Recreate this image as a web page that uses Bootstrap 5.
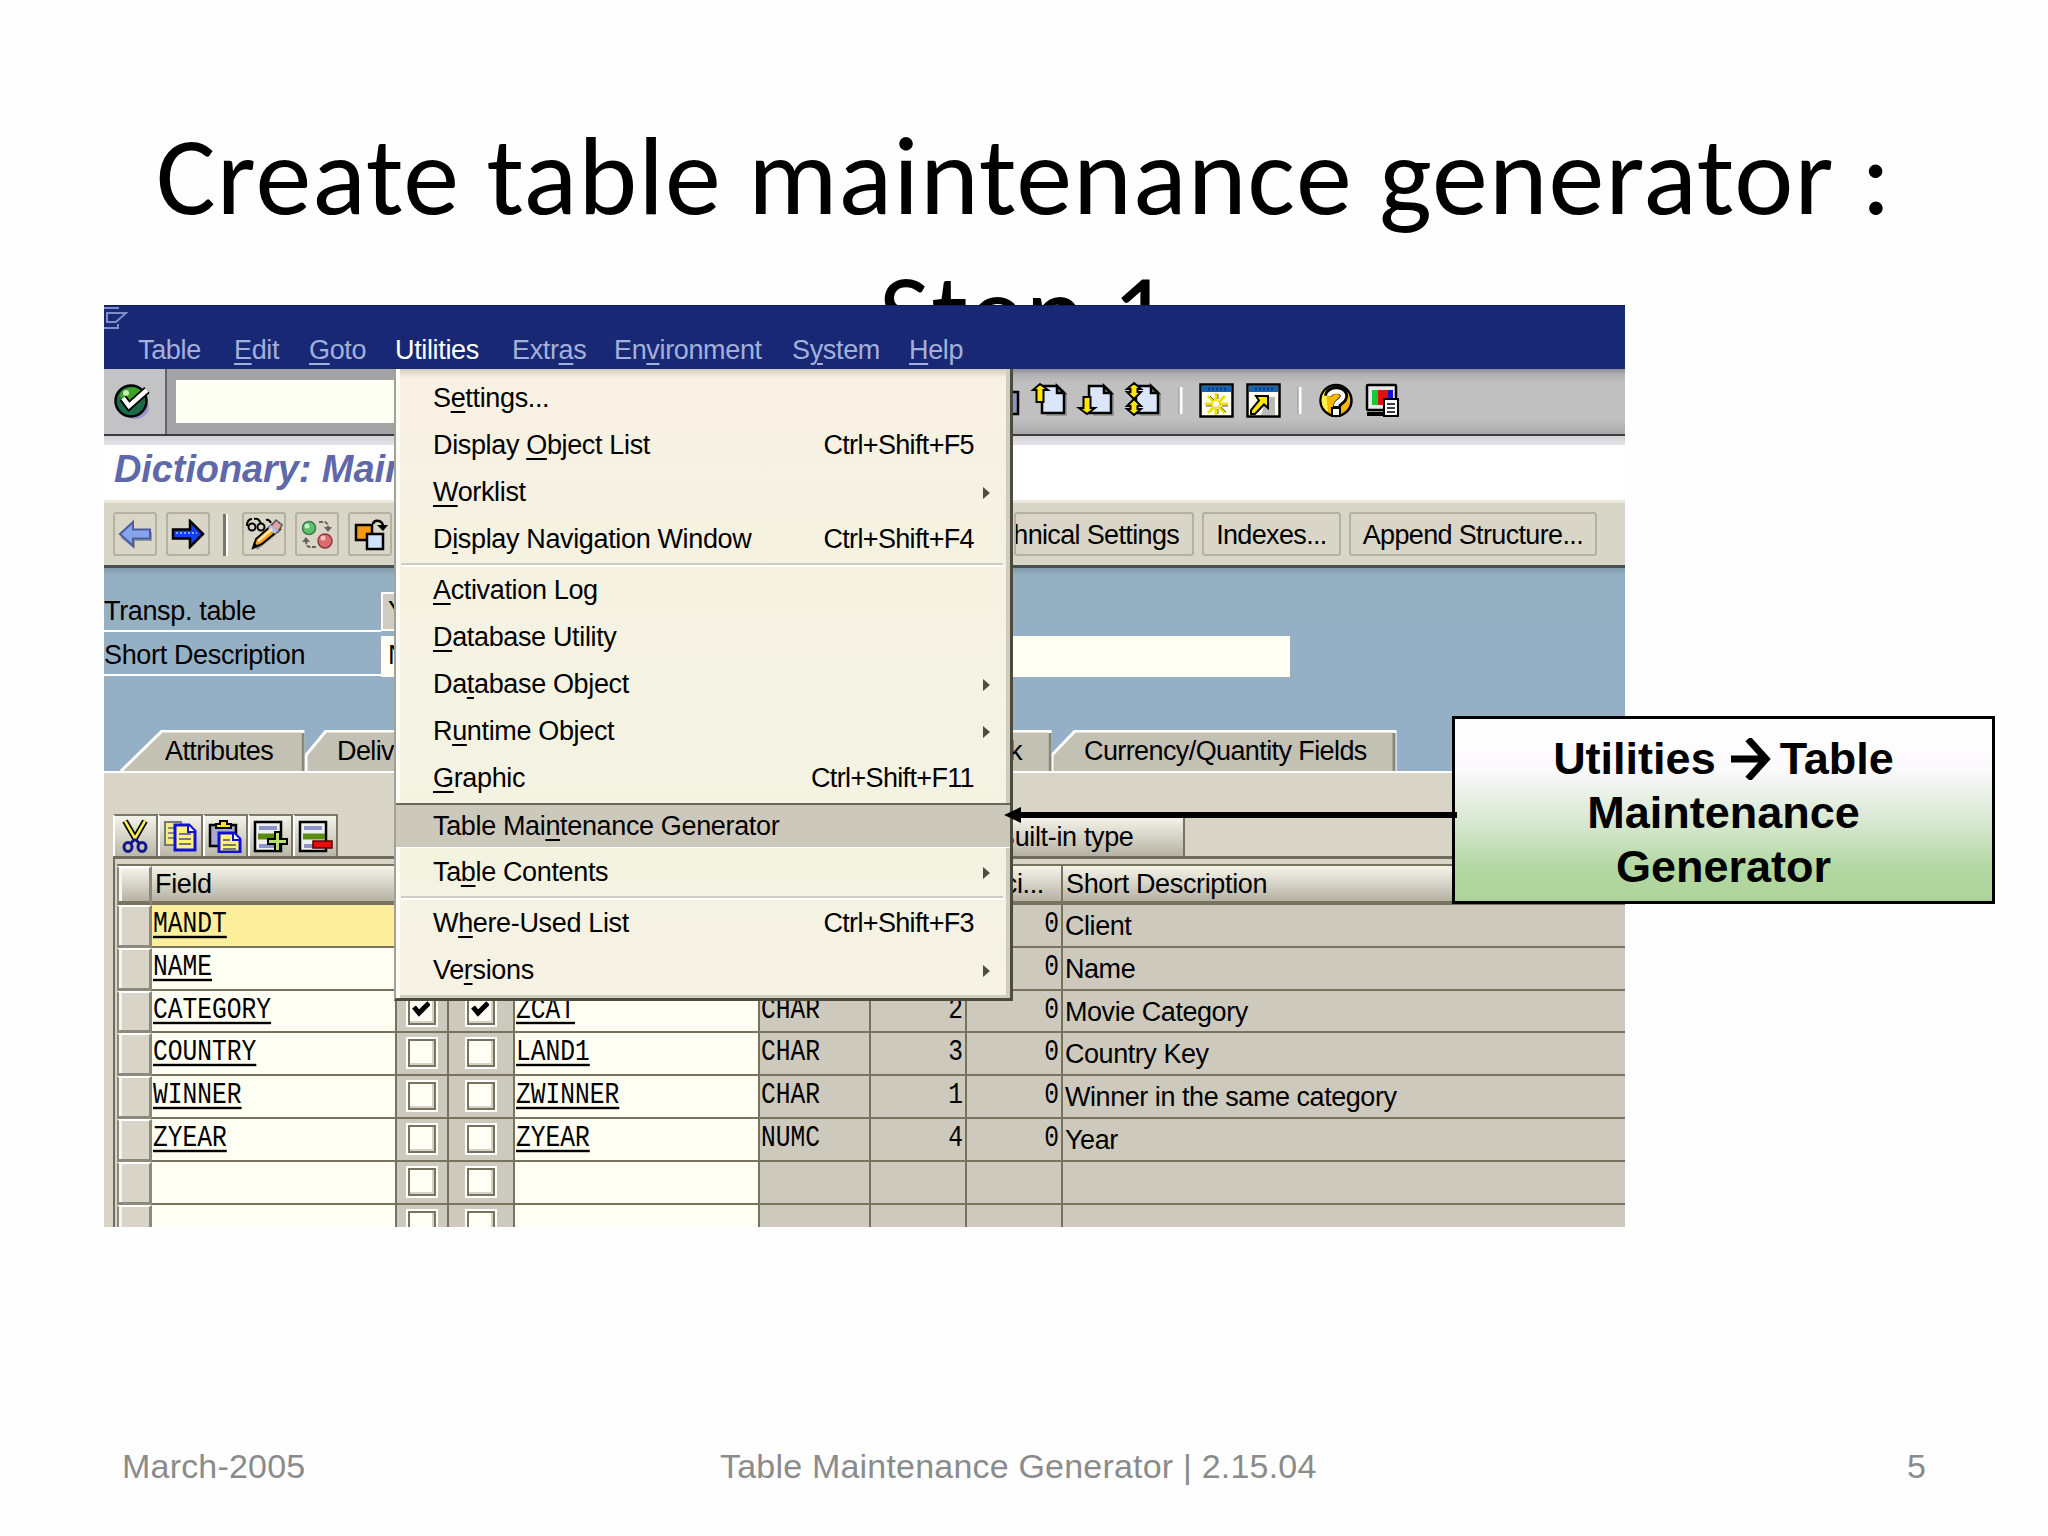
<!DOCTYPE html>
<html lang="en">
<head>
<meta charset="utf-8">
<title>Table Maintenance Generator</title>
<link href="https://cdn.jsdelivr.net/npm/bootstrap@5.3.0/dist/css/bootstrap.min.css" rel="stylesheet">
<style>
  body{background:#fefefe;color:#000;font-family:"Liberation Sans",Arial,sans-serif;margin:0}
  .slide{width:2048px;height:1536px;overflow:hidden}
  .slide-title{height:305px;padding-top:107px;overflow:hidden;font:400 112px/137px Carlito,Lato,sans-serif;letter-spacing:1.05px;white-space:nowrap}
  .sap{width:1521px;height:922px;margin-left:104px;font-size:27px;letter-spacing:-.35px;line-height:38px;white-space:nowrap;background:#d8d5c6}
  .sap u{text-underline-offset:4px;text-decoration-thickness:2px}
  .menubar{height:64px;background:#182874;color:#a3b0dc;border-top:1px solid #101c58;padding-left:34px;display:grid;grid-template-columns:96px 75px 86px 117px 102px 178px 117px 80px;align-items:end}
  .menubar .on{color:#fff}
  .corner{left:0;top:0}
  .stdbar{height:67px;background:linear-gradient(#8e8e96,#b2b2b4 6px,#c0c0c1 14px,#c0c0c1 50px,#a9a9a9);border-bottom:2.5px solid #3c3c40}
  .okcell{width:63px;border-right:2px solid #66666a;background:#c3c3c6;padding-left:9px}
  .cmdzone{width:846px;background:#a3a3a5;padding:11px 0 0 9px}
  .cmdfield{width:225px;height:43px;background:#fdfff2}
  .heading{height:67px;background:linear-gradient(#d4d2d6,#e6e3e8 9px,#fff 9px);border-bottom:3px solid #ece9dc;font-weight:700;font-style:italic;font-size:38px;line-height:66px;color:#5f69a9;letter-spacing:-.1px;padding-left:10px;overflow:hidden}
  .appbar{height:65px;background:#d8d6c6;border-bottom:3px solid #4a4f52;padding:9px 28px 0 9px}
  .tbtn{height:44px;border:2px solid #b4b1a1;border-radius:3px;background:#d9d6c7;padding:0 12px;letter-spacing:-.65px;line-height:42px}
  .tbtn.ic{width:44px;padding:0;margin-right:9px;display:flex;align-items:center;justify-content:center}
  .tbtn.tech{width:180px;padding:0 13px 0 0;overflow:hidden;display:flex;justify-content:flex-end}
  .tsep{width:5px;height:42px;background:#7a7768;border-right:2px solid #fff;margin:2px 14px 0 4px}
  .headform{height:162px;background:linear-gradient(#7f98a8,#95b0c2 7px,#95b0c6)}
  .frow{height:40px;width:277px;border-bottom:2.5px solid #fff;line-height:38px}
  .namebox{width:40px;height:39px;background:#cfcdc1;border:2px solid #fff;padding-left:5px;line-height:34px}
  .descbox{width:909px;height:41px;background:#fffef2;padding-left:7px;line-height:39px}
  .tabs{height:43px;background:#95b0c6;border-bottom:2.5px solid #fff}
  .gridbody{padding:41px 0 0 9px}
  .gbtn{width:45px;height:42px;background:linear-gradient(#f4f3ea,#b9b7a8);border:2px solid #7b7869;border-left-color:#fff;border-bottom:0;display:flex;align-items:center;justify-content:center;padding-right:2px}
  .gframe{border-left:2px solid #6f6c5e;border-top:3px solid #6f6c5e;padding:5px 0 0 2px}
  .line9{display:grid;grid-template-columns:35px 245px 52px 66px 245px 111px 96px 96px 562px;height:42.8px}
  .line9>div{border-right:2.5px solid #77735f;border-bottom:2.5px solid #77735f;background:#cdcabd;overflow:hidden}
  .line9>div:last-child{border-right:0}
  .line9 .sel{background:#d8d5c8;border:3px solid #8d8a7c;border-left:2px solid #8d8a7c;border-top:2px solid #fff;box-shadow:inset 3px 0 0 #f6f5ee}
  .line9 .ed{background:#fffef2}
  .line9 .hot{background:#fdee9b}
  .line9 .mono{font-family:"Liberation Mono",monospace;font-size:24.6px;letter-spacing:0;line-height:40px;padding-left:1px}
  .line9 .mono span{display:inline-block;transform:scaleY(1.2)}
  .line9 .mono .key{text-decoration:underline;text-decoration-thickness:2px;text-underline-offset:3px;text-decoration-skip-ink:none}
  .line9 .num{text-align:right;padding-right:2px}
  .line9.hd{height:41px;border-top:2px solid #77735f}
  .line9.hd>div{background:linear-gradient(#f6f4ea,#e0ded2 35%,#b5b2a4);border-bottom:4px solid #77735f;line-height:36px;padding-left:3px}
  .line9 .dec{text-align:right;padding-right:17px}
  .cbx{width:32px;height:32px;border:2px solid #fff;margin:4px auto 0;background:#77735f;padding:2px}
  .cbx i{display:block;width:24px;height:24px;background:#fffef4;border-right:2px solid #d4d2c6;border-bottom:2px solid #d4d2c6}
  .desc{padding-left:2px;line-height:43px;letter-spacing:-.45px}
  .built{width:191px;height:39px;margin-left:656px;padding-left:3px;background:linear-gradient(#f6f4ea,#b5b2a4);border-right:2px solid #77735f;overflow:hidden;line-height:40px}
  .umenu{left:290px;top:64px;width:619px;height:632px;background:linear-gradient(#d0ccc0,#f8f1e4 9px,#f7f1e3 80px,#f5f2e2 160px,#f4f3e2 500px,#f6f2e4);border:2px solid #a5a293;border-top:0;border-right:3px solid #4c4b3c;border-bottom:3px solid #4c4b3c;box-shadow:inset 4px 0 0 #fefdf8,inset -4px -3px 0 #cfcdc0;padding:6px 0 0 0}
  .mi{height:47px;line-height:47px;padding:0 36px 0 37px;display:flex;justify-content:space-between;align-items:center}
  .mi span+span{letter-spacing:-.65px}
  .mi.sub{padding-right:20px}
  .mi.act{background:#ccc8bb;height:45px;line-height:42px;margin:1px 0;border-top:2px solid #6b685a;border-bottom:1px solid #fff}
  .msep{height:4px;border-top:2px solid #cfcdc2;border-bottom:2px solid #fff;margin:0 7px 0 5px}
  .tri{width:0;height:0;border-left:7px solid #4f4d42;border-top:6px solid transparent;border-bottom:6px solid transparent}
  .callout{left:1452px;top:716px;width:543px;height:188px;border:3px solid #000;background:linear-gradient(#fff,#fbf9fc 28%,#d3e6cb 60%,#b2d7a1 82%,#aed39a);font-weight:700;font-size:45px;line-height:54.4px;padding-top:12.5px}
  .callout svg{margin:-6px -4px 0 3px}
  .arrow{left:1004px;top:804px}
  .foot{color:#8b8b8b;font-size:34px;letter-spacing:.2px;line-height:40px;margin-top:219px;padding:0 122px 0 122px;display:grid;grid-template-columns:598px 1fr auto}
</style>
<script src="https://cdn.jsdelivr.net/npm/bootstrap@5.3.0/dist/js/bootstrap.bundle.min.js"></script>
</head>
<body>
<main class="slide position-relative">
  <h1 class="slide-title text-center m-0">Create table maintenance generator :<br>Step 1</h1>

  <section class="sap position-relative overflow-hidden">
    <nav class="menubar">
      <span>Table</span><span><u>E</u>dit</span><span><u>G</u>oto</span><span class="on">Utilities</span><span>Extr<u>a</u>s</span><span>En<u>v</u>ironment</span><span>S<u>y</u>stem</span><span><u>H</u>elp</span>
    </nav>
    <svg class="corner position-absolute" width="26" height="26" fill="none" stroke="#7f8dc8" stroke-width="2"><path d="M0 3H15M3 8H22L12 17H3ZM0 23H14V19"/></svg>

    <div class="stdbar d-flex">
      <div class="okcell d-flex align-items-center">
        <svg width="38" height="38" viewBox="0 0 38 38"><ellipse cx="22" cy="24" rx="14" ry="12" fill="#9a98c8"/><circle cx="18" cy="18" r="15.5" fill="#1d6a4a" stroke="#000" stroke-width="2.5"/><path d="M6 14a13 12 0 0 1 22-6L18 18Z" fill="#3fa32a"/><circle cx="13" cy="10" r="3" fill="#c8f0b0"/><path d="M10 15l6 8L34 7" fill="none" stroke="#000" stroke-width="8"/><path d="M10 15l6 8L34 7" fill="none" stroke="#fff" stroke-width="4.5"/></svg>
      </div>
      <div class="cmdzone flex-shrink-0"><div class="cmdfield"></div></div>
      <div class="d-flex align-items-center flex-grow-1 pb-1">
        <svg width="390" height="40" viewBox="0 0 390 40" stroke="#000" stroke-width="2.5">
          <path d="M-8 12H5V34H-8" fill="#8f93c0"/>
          <path d="M33 9h17l4 5v22H33zM80 9h17l4 5v22H80zM127 9h17l4 5v22H127z" fill="#9a9a9a" stroke="none"/>
          <g fill="#dbe6fb"><path d="M29 6H44L51 13V33H29Z"/><path d="M76 6H91L98 13V33H76Z"/><path d="M123 6H138L145 13V33H123Z"/></g>
          <g fill="#8c8c8c"><path d="M44 6V13H51Z"/><path d="M91 6V13H98Z"/><path d="M138 6V13H145Z"/></g>
          <g fill="#ffe800" stroke-width="2"><path d="M27 4l8 6h-4.500v12h-7V10H20z"/><path d="M74 34l8-6h-4.500V17h-7V28H66z"/><path d="M121 3l7 6h-3.500v3H128l-7 7-7-7h3.500V9H114zM121 35l7-6h-3.500v-3H128l-7-7-7 7h3.500v3H114z"/></g>
          <path d="M168 7V34M287 7V34" stroke="#fff" stroke-width="3"/>
          <path d="M166 7V34M285 7V34" stroke="#999" stroke-width="1"/>
          <g fill="#fffef0"><rect x="187.500" y="4.500" width="32" height="32"/><rect x="234.500" y="4.500" width="32" height="32"/></g>
          <path d="M189 9H218M236 9H265" stroke="#1564b4" stroke-width="6"/>
          <path d="M195 9H215M242 9H262" stroke="#0c3f80" stroke-width="3" stroke-dasharray="2 2"/>
          <path d="M203 13V35M192 24H215M195 16l17 17M212 16l-17 17" stroke="#f0e000" stroke-width="3"/>
          <path d="M205 14V19M205 29V34M197 16l4 4M208 27l5 5M193 26H199M209 26H215" stroke="#555" stroke-width="1"/><circle cx="203" cy="24" r="3" fill="#fff" stroke="none"/>
          <path d="M254 17h8v18h-14" fill="#bbb" stroke="none"/>
          <path d="M243 16H255V28L251 24.500L242 34H238V30L246 20.500Z" fill="#ffe800" stroke-width="2"/>
          <circle cx="323" cy="20.500" r="15.500" fill="#f6b800" stroke-width="2.500"/>
          <path d="M313 10a14 14 0 0 0 2 22Z" fill="#fff04a" stroke="none"/>
          <path d="M315 16c1-8 16-8 16 0 0 6-7 5-7 11" fill="none" stroke-width="8"/><path d="M316 16c1-6 14-6 14 0 0 5-7 5-7 10" fill="none" stroke="#fff" stroke-width="4.500"/><rect x="319" y="28" width="8" height="8" fill="#fff" stroke-width="2"/>
          <rect x="354" y="5" width="29" height="25" rx="1" fill="#e8e8e8"/><path d="M354 34H378" stroke-width="4"/>
          <path d="M359 10h6v15h-6z" fill="#16c832" stroke="none"/><path d="M365 10h10v15h-10z" fill="#e01010" stroke="none"/><path d="M375 10h5v15h-5z" fill="#1414d8" stroke="none"/>
          <rect x="371" y="19" width="14" height="17" fill="#fff" stroke-width="2"/><path d="M374 24H382M374 28H382M374 32H382" stroke-width="1.600"/>
        </svg>
      </div>
    </div>

    <div class="heading">Dictionary: Main</div>

    <div class="appbar d-flex">
      <div class="tbtn ic"><svg width="34" height="30" viewBox="0 0 34 30"><path d="M3 18 16 28V21H33V13" stroke="#999" stroke-width="2" fill="none"/><path d="M2 15 15 3V10.500H32V19.500H15V27Z" fill="#86a3ee" stroke="#4a5c9c" stroke-width="2"/></svg></div>
      <div class="tbtn ic"><svg width="34" height="30" viewBox="0 0 34 30"><path d="M32 15 19 2V10.500H2V19.500H19V28Z" fill="#1440f0" stroke="#000" stroke-width="2.500"/><path d="M5 14H26" stroke="#7fa4ff" stroke-width="2" stroke-dasharray="2 2"/></svg></div>
      <div class="tsep"></div>
      <div class="tbtn ic"><svg width="38" height="34" viewBox="0 0 38 34"><path d="M10 30 34 10" stroke="#999" stroke-width="8"/><path d="M8 31l3-9L28 7l7 5L17 27Z" fill="#f7a21c" stroke="#000" stroke-width="2"/><path d="M26 9l5-6 6 5-4 7Z" fill="#e6a0a0" stroke="#555" stroke-width="1.500"/><path d="M23 11l3-3 7 6-3 3z" fill="#a9c6ea"/><path d="M13 24 27 12" stroke="#ffe8a8" stroke-width="2.500"/><path d="M7 32l2-6 5 3z"/><path d="M2 9c0-6 3-7 5-7M9 2c4-1 5 1 7 4M21 3c3-1 4 1 5 3" fill="none" stroke="#000" stroke-width="2"/><circle cx="7" cy="10" r="3.500" fill="none" stroke="#000" stroke-width="2"/><circle cx="16" cy="10" r="3.500" fill="none" stroke="#000" stroke-width="2"/></svg></div>
      <div class="tbtn ic"><svg width="36" height="34" viewBox="0 0 36 34"><circle cx="10" cy="11" r="6.500" fill="#5fc06c" stroke="#3d7a48" stroke-width="1.500"/><circle cx="8" cy="9" r="2.500" fill="#c0f0c4"/><circle cx="26" cy="24" r="7" fill="#dd6c6c" stroke="#8a3a3a" stroke-width="1.500"/><circle cx="24" cy="21" r="2.500" fill="#f8c4c4"/><path d="M20 5H25Q29 5 29 11M17 30H11Q7 30 7 24" fill="none" stroke="#66645a" stroke-width="2" stroke-dasharray="4 1.500"/><path d="M25 10H33L29 15ZM3 25H11L7 20Z" fill="#66645a"/></svg></div>
      <div class="tbtn ic"><svg width="36" height="34" viewBox="0 0 36 34"><rect x="4" y="8" width="16" height="15" fill="#f59a10" stroke="#000" stroke-width="2.500"/><rect x="15" y="17" width="16" height="15" fill="#cfe4fb" stroke="#000" stroke-width="2.500"/><path d="M21 7Q22 3 27 4Q31 5 31 10" fill="none" stroke="#000" stroke-width="2.500"/><path d="M25 8H36L31 14Z"/></svg></div>
      <div class="d-flex ms-auto column-gap-2">
        <div class="tbtn tech"><span>hnical Settings</span></div>
        <div class="tbtn mx-0">Indexes...</div>
        <div class="tbtn">Append Structure...</div>
      </div>
    </div>

    <div class="headform">
      <div class="d-flex pt-4"><div class="frow">Transp. table</div><div class="namebox">Y</div></div>
      <div class="d-flex mt-1"><div class="frow">Short Description</div><div class="descbox">N</div></div>
    </div>

    <div class="tabs">
      <svg class="d-block" width="1521" height="41" font-family="Liberation Sans" font-size="27" letter-spacing="-.6">
        <g fill="#c3c1b4" stroke="#fff" stroke-width="3"><path d="M780 42V1H946V42"/><path d="M948 42V25L971 1H1291V42"/><path d="M202 42V25L222 1H330V42"/><path d="M17 41L58 1H199V42"/></g>
        <path d="M199 3V41M946 3V41M1290 3V41" stroke="#8a8778" stroke-width="3"/>
        <text x="61" y="30">Attributes</text><text x="233" y="30">Deliv</text><text x="905" y="30">k</text><text x="980" y="30">Currency/Quantity Fields</text>
      </svg>
    </div>

    <div class="gridbody">
      <div class="d-flex">
        <div class="gbtn"><svg width="28" height="34" viewBox="0 0 28 34"><path d="M4 2 15 21M24 2 13 21" stroke="#000" stroke-width="6"/><path d="M4 2 15 21M24 2 13 21" stroke="#fff04a" stroke-width="2.500"/><path d="M14 20 9 25M14 20l5 5" stroke="#14148c" stroke-width="3"/><ellipse cx="7" cy="28" rx="4" ry="4.500" fill="none" stroke="#14148c" stroke-width="3"/><ellipse cx="21" cy="28" rx="4" ry="4.500" fill="none" stroke="#14148c" stroke-width="3"/></svg></div>
        <div class="gbtn"><svg width="34" height="34" viewBox="0 0 34 34"><path d="M2 3H18V26H2Z" fill="#f4ec80" stroke="#777" stroke-width="2"/><path d="M5 9H11M5 14H11M5 19H11" stroke="#888" stroke-width="2"/><path d="M12 6H26L32 12V31H12Z" fill="#fff27a" stroke="#1010d8" stroke-width="3"/><path d="M25 6V13H32" fill="#fff" stroke="#1010d8" stroke-width="2"/><path d="M16 15H28M16 20H28M16 25H28" stroke="#777" stroke-width="2"/></svg></div>
        <div class="gbtn"><svg width="34" height="34" viewBox="0 0 34 34"><path d="M2 6H28V27H2Z" fill="#a9a8cc" stroke="#000" stroke-width="2.500"/><path d="M8 9V5H12V2H19V5H23V9Z" fill="#ffe800" stroke="#000" stroke-width="2"/><path d="M11 14H26L32 20V33H11Z" fill="#fff27a" stroke="#1010d8" stroke-width="3"/><path d="M25 14V21H32" fill="#fff" stroke="#1010d8" stroke-width="2"/><path d="M15 21H22M15 26H28M15 30H28" stroke="#777" stroke-width="2"/></svg></div>
        <div class="gbtn"><svg width="36" height="34" viewBox="0 0 36 34"><rect x="3" y="3" width="26" height="29" fill="#eef0f0" stroke="#000" stroke-width="2.500"/><path d="M7 9H25M7 27H25" stroke="#8d92c8" stroke-width="4"/><path d="M6 17.500H28" stroke="#5a8a10" stroke-width="6"/><path d="M23 13h5v7h7v5h-7v7h-5v-7h-7v-5h7z" fill="#b8e070" stroke="#000" stroke-width="2"/></svg></div>
        <div class="gbtn"><svg width="36" height="34" viewBox="0 0 36 34"><rect x="3" y="3" width="26" height="29" fill="#eef0f0" stroke="#000" stroke-width="2.500"/><path d="M7 9H25M7 27H25" stroke="#8d92c8" stroke-width="4"/><path d="M6 17.500H28" stroke="#5a8a10" stroke-width="6"/><rect x="16" y="22" width="19" height="7" fill="#e80c0c" stroke="#500" stroke-width="1.500"/></svg></div>
        <div class="built align-self-end">Built-in type</div>
      </div>
      <div class="gframe">
        <div class="line9 hd"><div class="sel"></div><div>Field</div><div></div><div></div><div></div><div></div><div></div><div class="dec">ci...</div><div>Short Description</div></div>
        <div id="rows"></div>
      </div>
    </div>

    <div class="umenu position-absolute">
      <div class="mi"><span>S<u>e</u>ttings...</span></div>
      <div class="mi"><span>Display <u>O</u>bject List</span><span>Ctrl+Shift+F5</span></div>
      <div class="mi sub"><span><u>W</u>orklist</span><i class="tri"></i></div>
      <div class="mi"><span>D<u>i</u>splay Navigation Window</span><span>Ctrl+Shift+F4</span></div>
      <div class="msep"></div>
      <div class="mi"><span><u>A</u>ctivation Log</span></div>
      <div class="mi"><span><u>D</u>atabase Utility</span></div>
      <div class="mi sub"><span>Da<u>t</u>abase Object</span><i class="tri"></i></div>
      <div class="mi sub"><span>R<u>u</u>ntime Object</span><i class="tri"></i></div>
      <div class="mi"><span><u>G</u>raphic</span><span>Ctrl+Shift+F11</span></div>
      <div class="mi act"><span>Table Mai<u>n</u>tenance Generator</span></div>
      <div class="mi sub"><span>Ta<u>b</u>le Contents</span><i class="tri"></i></div>
      <div class="msep"></div>
      <div class="mi"><span>W<u>h</u>ere-Used List</span><span>Ctrl+Shift+F3</span></div>
      <div class="mi sub"><span>Ve<u>r</u>sions</span><i class="tri"></i></div>
    </div>
  </section>

  <div class="callout position-absolute text-center">Utilities <svg width="40" height="42" viewBox="0 0 40 42"><path d="M0 21H34M17 1 35 21 17 41" fill="none" stroke="#000" stroke-width="7"/></svg> Table<br>Maintenance<br>Generator</div>
  <svg class="arrow position-absolute" width="453" height="22"><path d="M0 11 17 3V8H453V14H17V19Z"/></svg>

  <footer class="foot"><span>March-2005</span><span>Table Maintenance Generator | 2.15.04</span><span>5</span></footer>
</main>
<script>
  const rows = [
    ['MANDT','','','','0','Client',0],
    ['NAME','','','','0','Name',0],
    ['CATEGORY','ZCAT','CHAR','2','0','Movie Category',1],
    ['COUNTRY','LAND1','CHAR','3','0','Country Key',0],
    ['WINNER','ZWINNER','CHAR','1','0','Winner in the same category',0],
    ['ZYEAR','ZYEAR','NUMC','4','0','Year',0],
    ['','','','','','',0],
    ['','','','','','',0]
  ];
  const key = t => t ? `<span class="key">${t}</span>` : '';
  const val = t => t ? `<span>${t}</span>` : '';
  const tick = '<svg class="d-block" width="20" height="20" viewBox="0 0 20 20"><path d="M4 8l5 6L19 4" fill="none" stroke="#000" stroke-width="5"/></svg>';
  document.getElementById('rows').innerHTML = rows.map((r, i) => {
    const box = `<div><div class="cbx"><i>${r[6] ? tick : ''}</i></div></div>`;
    return `<div class="line9"><div class="sel"></div><div class="mono ed ${i ? '' : 'hot'}">${key(r[0])}</div>${box}${box}` +
      `<div class="mono ed">${key(r[1])}</div><div class="mono">${val(r[2])}</div><div class="mono num">${val(r[3])}</div>` +
      `<div class="mono num">${val(r[4])}</div><div class="desc">${r[5]}</div></div>`;
  }).join('');
</script>
</body>
</html>
